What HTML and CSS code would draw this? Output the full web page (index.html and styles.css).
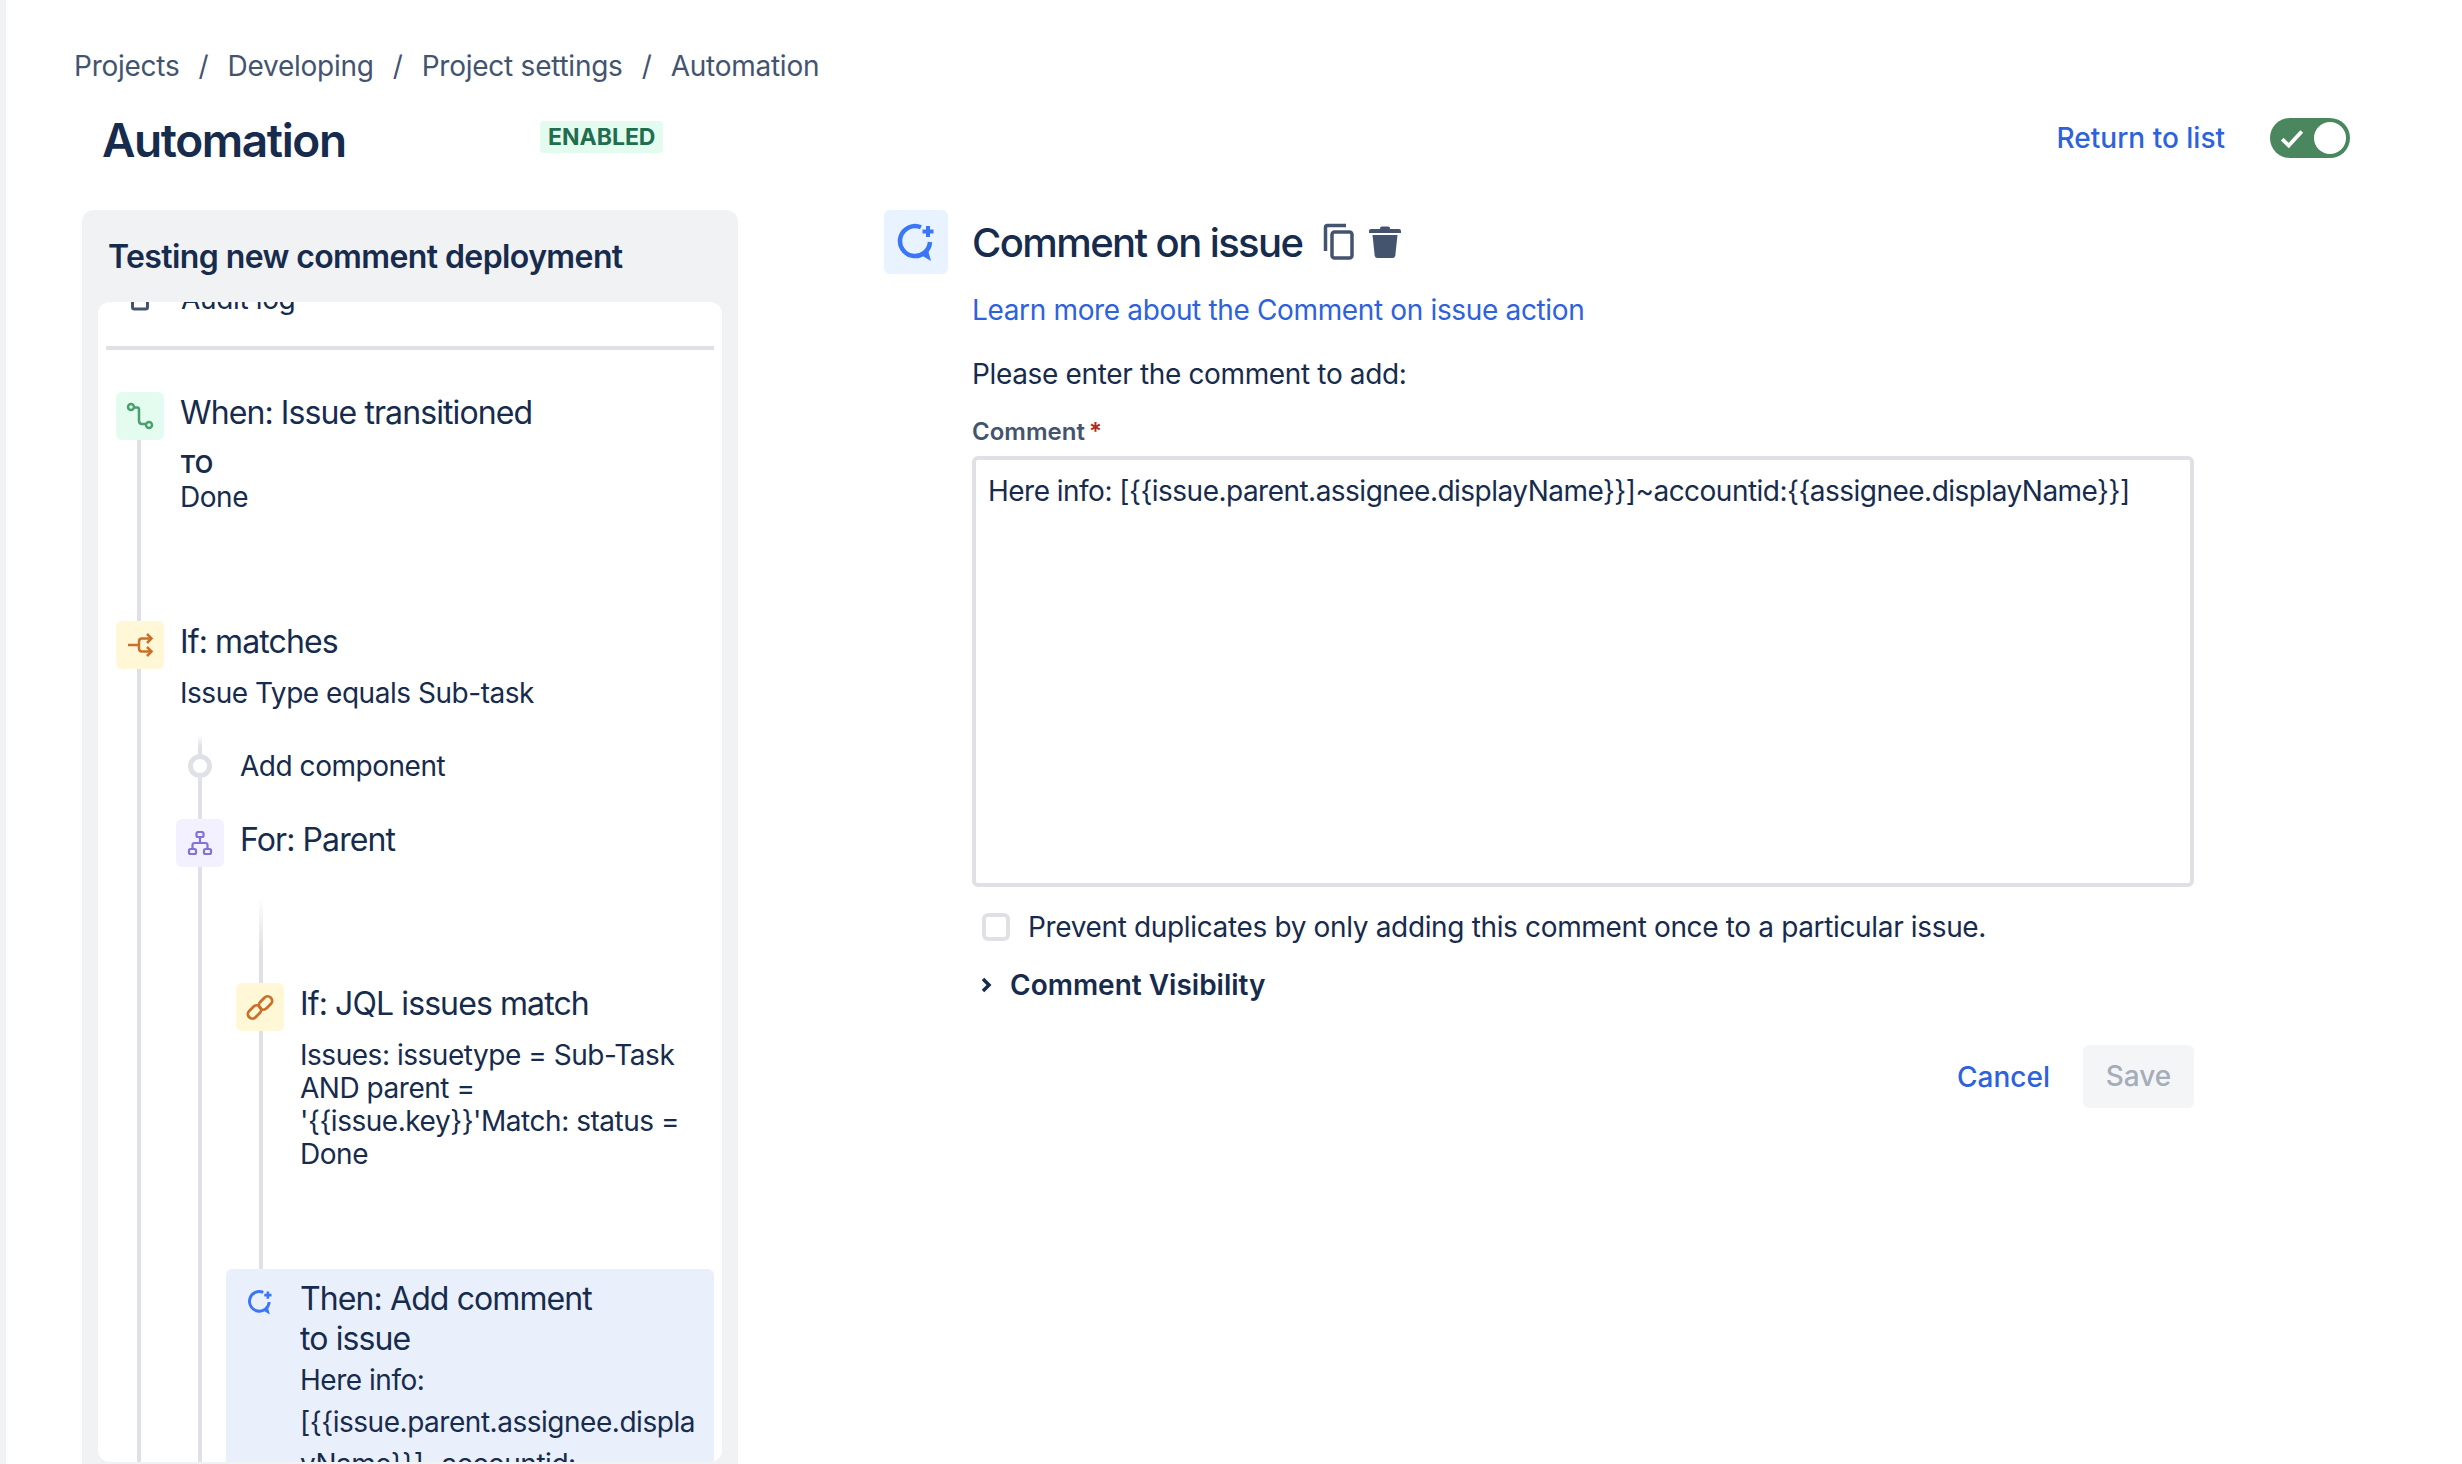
FILE: index.html
```html
<!DOCTYPE html>
<html>
<head>
    <title>Automation</title>
    <link rel="stylesheet" href="styles.css">
</head>
<body>
    <nav class="breadcrumbs">
        <span>Projects</span><span class="crumb-sep">/</span>
        <span>Developing</span><span class="crumb-sep">/</span>
        <span>Project settings</span><span class="crumb-sep">/</span>
        <span>Automation</span>
    </nav>

    <header class="page-header">
        <h1 class="page-title">Automation</h1>
        <span class="badge">ENABLED</span>
        <a class="return-link">Return to list</a>
        <div class="toggle">
            <svg class="toggle-check" viewBox="0 0 24 24" fill="none">
                <path d="M3 13l6 6L21 6" stroke="#fff" stroke-width="3.500"/>
            </svg>
            <span class="toggle-knob"></span>
        </div>
    </header>

    <main class="main">
        <section class="panel">
            <h2 class="panel-title">Testing new comment deployment</h2>
            <div class="tree">
                <div class="audit-row">
                    <svg class="audit-icon" viewBox="0 0 18 24" fill="none">
                        <rect x="1.5" y="2" width="15" height="20" rx="2" stroke="#44546f" stroke-width="3"/>
                    </svg>
                    <span>Audit log</span>
                </div>
                <div class="divider"></div>

                <div class="step step-when">
                    <div class="rail">
                        <span class="node node-green">
                            <svg viewBox="0 0 48 48" fill="none" stroke="#4a9f6f" stroke-width="2.5">
                                <circle cx="15" cy="15" r="3"/>
                                <circle cx="33" cy="33" r="3"/>
                                <path d="M18 15.5h3q2 0 2 2v11q0 3.500 3 3.500h4"/>
                            </svg>
                        </span>
                        <span class="line"></span>
                    </div>
                    <div class="body">
                        <div class="step-title">When: Issue transitioned</div>
                        <div class="step-to">TO</div>
                        <div class="step-desc">Done</div>
                    </div>
                </div>

                <div class="step step-if">
                    <div class="rail">
                        <span class="node node-yellow">
                            <svg viewBox="0 0 48 48" fill="none" stroke="#c9702a" stroke-width="2.500">
                                <path d="M12 24h11"/>
                                <path d="M35 17.500H26q-3 0-3 3v7q0 3 3 3h9"/>
                                <path d="M31 13l4.500 4.500L31 22M31 26l4.500 4.500L31 35"/>
                            </svg>
                        </span>
                        <span class="line"></span>
                    </div>
                    <div class="body">
                        <div class="step-title">If: matches</div>
                        <div class="step-desc desc-gap">Issue Type equals Sub-task</div>

                        <div class="step step-add">
                            <div class="rail">
                                <span class="line-fade line-fade-short"></span>
                                <span class="ring"></span>
                                <span class="line"></span>
                            </div>
                            <div class="body body-add">
                                <div class="step-desc">Add component</div>
                            </div>
                        </div>

                        <div class="step">
                            <div class="rail">
                                <span class="node node-purple">
                                    <svg viewBox="0 0 48 48" fill="none" stroke="#8270db" stroke-width="2.200">
                                        <rect x="20.500" y="13" width="7" height="5" rx="1.500"/>
                                        <rect x="13" y="30" width="7" height="5" rx="1.500"/>
                                        <rect x="28" y="30" width="7" height="5" rx="1.500"/>
                                        <path d="M24 18v6M16.500 30v-4q0-2 2-2h11q2 0 2 2v4"/>
                                    </svg>
                                </span>
                                <span class="line"></span>
                            </div>
                            <div class="body">
                                <div class="step-title">For: Parent</div>

                                <div class="step step-jql">
                                    <div class="rail">
                                        <span class="line-fade line-fade-long"></span>
                                        <span class="node node-yellow">
                                            <svg viewBox="0 0 48 48" fill="none" stroke="#c9702a" stroke-width="2.800">
                                                <rect x="11" y="24.500" width="15" height="9" rx="4.500" transform="rotate(-45 18.500 29)"/>
                                                <rect x="22" y="15.500" width="15" height="9" rx="4.500" transform="rotate(-45 29.500 20)"/>
                                            </svg>
                                        </span>
                                        <span class="line"></span>
                                    </div>
                                    <div class="body body-jql">
                                        <div class="step-title">If: JQL issues match</div>
                                        <div class="step-desc desc-gap">Issues: issuetype = Sub-Task AND parent = '{{issue.key}}'Match: status = Done</div>
                                    </div>
                                </div>

                                <div class="step step-selected">
                                    <div class="rail">
                                        <span class="node">
                                            <svg viewBox="0 0 64 64" fill="none" class="comment-small">
                                                <path d="M37 17.300A15 15 0 1 0 46 32" stroke="#3b76f6" stroke-width="4.500"/>
                                                <path d="M37 45l7-5 3 11z" fill="#3b76f6"/>
                                                <path d="M44 16v11M38.500 21.500h11" stroke="#3b76f6" stroke-width="4"/>
                                            </svg>
                                        </span>
                                    </div>
                                    <div class="body">
                                        <div class="step-title title-narrow">Then: Add comment to issue</div>
                                        <div class="step-desc desc-long">Here info: [{{issue.parent.assignee.displayName}}]~accountid:{{assignee.displayName}}]</div>
                                    </div>
                                </div>
                            </div>
                        </div>
                    </div>
                </div>
            </div>
        </section>

        <section class="editor">
            <div class="editor-icon">
                <svg viewBox="0 0 64 64" fill="none">
                    <path d="M37 17.300A15 15 0 1 0 46 32" stroke="#3b76f6" stroke-width="4.500"/>
                    <path d="M37 45l7-5 3 11z" fill="#3b76f6"/>
                    <path d="M44 16v11M38.500 21.500h11" stroke="#3b76f6" stroke-width="4"/>
                </svg>
            </div>
            <div class="form">
                <div class="form-head">
                    <h2 class="form-title">Comment on issue</h2>
                    <svg class="copy-icon" viewBox="0 0 32 38" fill="none" stroke="#44546f" stroke-width="3.500">
                        <rect x="9" y="9" width="20" height="26" rx="2.500"/>
                        <path d="M23 2.500H4.500q-2 0-2 2V28"/>
                    </svg>
                    <svg class="trash-icon" viewBox="0 0 32 32" fill="#44546f">
                        <path d="M11 2.500q0-2 2-2h6q2 0 2 2V3h9q2 0 2 2v2H0V5q0-2 2-2h9z"/>
                        <path d="M3.500 9h25l-2.200 20.500q-.3 2.500-2.800 2.500h-15q-2.500 0-2.800-2.500z"/>
                    </svg>
                </div>
                <a class="learn-link">Learn more about the Comment on issue action</a>
                <p class="intro">Please enter the comment to add:</p>
                <label class="field-label">Comment<span class="required">*</span></label>
                <div class="comment-box">Here info: [{{issue.parent.assignee.displayName}}]~accountid:{{assignee.displayName}}]</div>
                <div class="check-row">
                    <span class="checkbox"></span>
                    <span>Prevent duplicates by only adding this comment once to a particular issue.</span>
                </div>
                <div class="visibility-row">
                    <svg class="chevron" viewBox="0 0 12 16" fill="none">
                        <path d="M3 2L9 8l-6 6" stroke="#172b4d" stroke-width="3.500"/>
                    </svg>
                    <span>Comment Visibility</span>
                </div>
                <div class="actions">
                    <a class="cancel">Cancel</a>
                    <span class="save">Save</span>
                </div>
            </div>
        </section>
    </main>
</body>
</html>
```

FILE: styles.css
```css
:root {
    --text-color: #172b4d;
    --text-subtle: #44546f;
    --link-color: #2d62dc;
    --line-color: #dfe1e6;
    --panel-color: #f1f2f4;
}

* {
    box-sizing: border-box;
    margin: 0;
    padding: 0;
}

html, body {
    height: 100%;
}

body {
    display: flex;
    flex-direction: column;
    overflow: hidden;
    padding-top: 46px;
    border-left: 6px solid var(--panel-color);
    background-color: #fff;
    color: var(--text-color);
    font-family: 'Inter', 'Liberation Sans', sans-serif;
    font-size: 28px;
    line-height: 40px;
    letter-spacing: -0.35px;
}

.breadcrumbs {
    display: flex;
    padding-left: 68px;
    color: var(--text-subtle);
    letter-spacing: -0.25px;
}

.crumb-sep {
    width: 48px;
    text-align: center;
}

.page-header {
    display: flex;
    align-items: center;
    height: 64px;
    margin-top: 22px;
    padding: 0 112px 0 96px;
}

.page-title {
    width: 438px;
    font-size: 46px;
    font-weight: 600;
    line-height: 64px;
    letter-spacing: -1.4px;
}

.badge {
    height: 32px;
    margin-top: -6px;
    padding: 0 8px;
    border-radius: 4px;
    background-color: #e3fcef;
    color: #216e4e;
    font-size: 23px;
    font-weight: 700;
    line-height: 32px;
    letter-spacing: 0;
}

.return-link {
    margin-top: -4px;
    margin-left: auto;
    margin-right: 45px;
    color: var(--link-color);
    font-weight: 500;
    letter-spacing: 0;
}

.toggle {
    display: flex;
    align-items: center;
    justify-content: space-between;
    width: 80px;
    height: 40px;
    margin-top: -4px;
    padding: 0 4px 0 9px;
    border-radius: 20px;
    background-color: #4a875f;
}

.toggle-check {
    width: 26px;
    height: 26px;
}

.toggle-knob {
    width: 32px;
    height: 32px;
    border-radius: 50%;
    background-color: #fff;
}

.main {
    display: flex;
    flex: 1;
    min-height: 0;
    gap: 146px;
    margin-top: 38px;
    padding-left: 76px;
}

/* left rule tree */
.panel {
    display: flex;
    flex-direction: column;
    width: 656px;
    padding: 0 16px 2px;
    border-radius: 12px 12px 0 0;
    background-color: var(--panel-color);
}

.panel-title {
    height: 92px;
    padding-left: 10px;
    font-size: 32px;
    font-weight: 600;
    line-height: 93px;
    letter-spacing: -0.6px;
}

.tree {
    flex: 1;
    min-height: 0;
    overflow: hidden;
    padding: 0 8px;
    border-radius: 12px;
    background-color: #fff;
}

.audit-row {
    display: flex;
    align-items: center;
    gap: 32px;
    margin-top: -23px;
    padding-left: 25px;
}

.audit-icon {
    width: 18px;
    height: 24px;
}

.divider {
    height: 4px;
    margin-top: 27px;
    background-color: var(--line-color);
}

.step {
    display: flex;
    gap: 16px;
}

.step-when {
    min-height: 229px;
    margin-top: 42px;
    padding-left: 10px;
}

.step-if {
    padding-left: 10px;
}

.rail {
    display: flex;
    flex: none;
    flex-direction: column;
    align-items: center;
    width: 48px;
}

.node {
    display: flex;
    flex: none;
    align-items: center;
    justify-content: center;
    width: 48px;
    height: 48px;
    border-radius: 6px;
}

.node svg {
    width: 48px;
    height: 48px;
}

.node .comment-small {
    width: 42px;
    height: 42px;
}

.node-green {
    background-color: #e3fcef;
}

.node-yellow {
    background-color: #fff7d6;
}

.node-purple {
    background-color: #f3f0ff;
}

.line {
    flex: 1;
    width: 4px;
    background-color: var(--line-color);
}

.step-when > .rail > .line,
.step-if > .rail > .line {
    margin-left: -2px;
}

.step-jql > .rail > .line,
.step-jql > .rail > .line-fade {
    margin-left: 2px;
}

.line-fade {
    flex: none;
    width: 4px;
    background: linear-gradient(to bottom, #fff, var(--line-color) 60%);
}

.line-fade-short {
    height: 19px;
}

.line-fade-long {
    height: 85px;
}

.ring {
    flex: none;
    width: 24px;
    height: 24px;
    border: 5px solid var(--line-color);
    border-radius: 50%;
}

.body {
    flex: 1;
    min-width: 0;
}

.body .step {
    margin-left: -4px;
}

.step-title {
    padding-top: 1px;
    font-size: 32px;
    line-height: 40px;
    letter-spacing: -0.9px;
}

.step-to {
    margin-top: 15px;
    font-size: 24px;
    font-weight: 600;
    line-height: 33px;
}

.step-desc {
    line-height: 33px;
    letter-spacing: -0.47px;
}

.desc-gap {
    margin-top: 15px;
}

.body .step-add {
    min-height: 84px;
    margin-top: 25px;
}

.body-add {
    padding-top: 15px;
}

.step-jql {
    margin-top: 38px;
}

.body-jql {
    padding-top: 85px;
    padding-bottom: 98px;
}

.body .step-selected {
    margin-left: -14px;
    padding: 9px 8px 0 10px;
    border-radius: 6px;
    background-color: #e9f0fc;
}

.title-narrow {
    max-width: 300px;
}

.desc-long {
    overflow-wrap: anywhere;
    line-height: 42px;
}

/* right editor */
.editor {
    display: flex;
    gap: 24px;
    width: 1310px;
}

.editor-icon {
    flex: none;
    width: 64px;
    height: 64px;
    border-radius: 6px;
    background-color: #e9f2ff;
}

.editor-icon svg {
    display: block;
    width: 64px;
    height: 64px;
}

.form {
    flex: 1;
    min-width: 0;
}

.form-head {
    display: flex;
    align-items: center;
    height: 64px;
}

.form-title {
    padding-top: 2px;
    font-size: 40px;
    font-weight: 500;
    line-height: 64px;
    letter-spacing: -1.6px;
}

.copy-icon {
    width: 32px;
    height: 38px;
    margin-left: 21px;
}

.trash-icon {
    width: 32px;
    height: 32px;
    margin-left: 14px;
}

.learn-link {
    display: block;
    margin-top: 16px;
    color: var(--link-color);
}

.intro {
    margin-top: 24px;
}

.field-label {
    display: block;
    margin-top: 22px;
    color: var(--text-subtle);
    font-size: 24px;
    font-weight: 600;
    line-height: 32px;
    letter-spacing: 0;
}

.required {
    margin-left: 4px;
    color: #ae2a19;
}

.comment-box {
    height: 431px;
    margin-top: 8px;
    padding: 11px 12px;
    border: 4px solid var(--line-color);
    border-radius: 6px;
    letter-spacing: -0.52px;
}

.check-row {
    display: flex;
    align-items: center;
    gap: 18px;
    margin-top: 20px;
    padding-left: 10px;
}

.checkbox {
    flex: none;
    width: 28px;
    height: 28px;
    border: 4px solid var(--line-color);
    border-radius: 6px;
}

.visibility-row {
    display: flex;
    align-items: center;
    gap: 18px;
    margin-top: 18px;
    padding-left: 8px;
    font-weight: 600;
    letter-spacing: 0;
}

.chevron {
    width: 12px;
    height: 16px;
}

.actions {
    display: flex;
    align-items: center;
    justify-content: flex-end;
    gap: 33px;
    margin-top: 40px;
    letter-spacing: 0;
}

.cancel {
    color: var(--link-color);
    font-weight: 500;
}

.save {
    width: 111px;
    height: 63px;
    border-radius: 6px;
    background-color: #f4f5f7;
    color: #a5adba;
    font-weight: 500;
    line-height: 63px;
    text-align: center;
}
```
